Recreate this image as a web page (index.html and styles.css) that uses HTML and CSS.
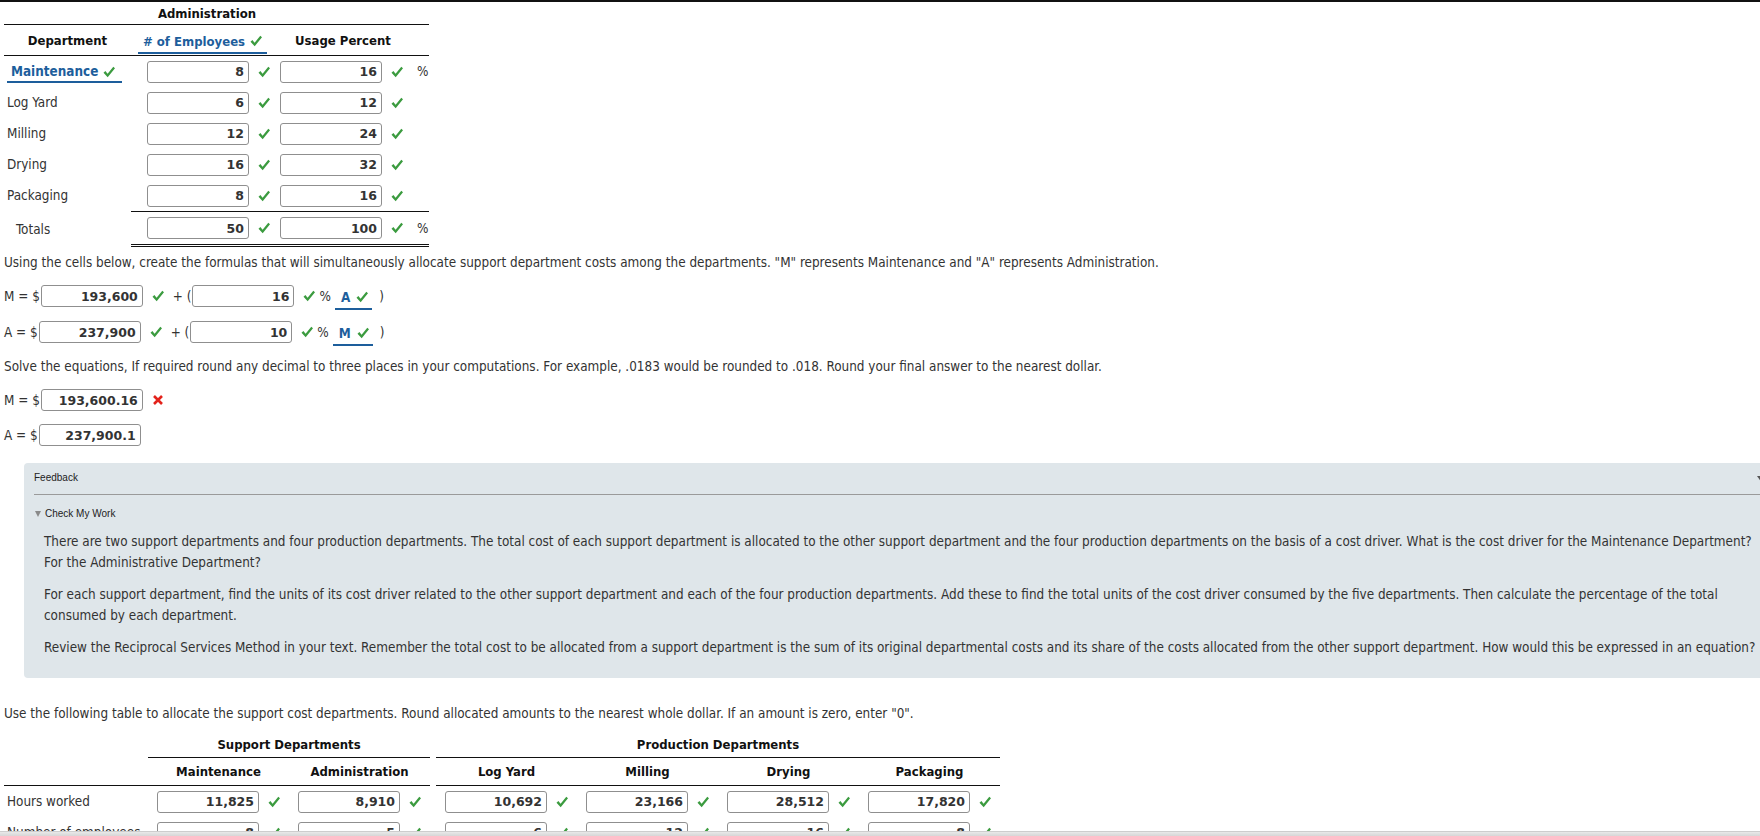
FILE: index.html
```html
<!DOCTYPE html>
<html lang="en">
<head>
<meta charset="utf-8">
<title>Reciprocal Services Method</title>
<link rel="stylesheet" href="styles.css">
</head>
<body>
<svg width="0" height="0" class="defs" aria-hidden="true">
  <defs>
    <path id="ckp" d="M0.5 6.7 L2.4 5.1 L4.6 7.8 L10.3 0.8 L12 2.2 L4.7 11.2 Z"/>
  </defs>
</svg>
<div class="page">

  <div class="emp">
    <div class="r1"></div>
    <div class="r1 th th-admin">Administration</div>
    <div class="r1"></div>
    <div class="r1"></div>

    <div class="r2 th">Department</div>
    <div class="r2 th"><span class="sel sel-h"># of Employees <svg class="ck" viewBox="0 0 12 12"><use href="#ckp"/></svg></span></div>
    <div class="r2 th">Usage Percent</div>
    <div class="r2"></div>

    <div class="lab"><span class="sel sel-d">Maintenance <svg class="ck" viewBox="0 0 12 12"><use href="#ckp"/></svg></span></div>
    <div class="num"><span class="box">8</span><svg class="ck" viewBox="0 0 12 12"><use href="#ckp"/></svg></div>
    <div class="use"><span class="box">16</span><svg class="ck" viewBox="0 0 12 12"><use href="#ckp"/></svg></div>
    <div class="pct">%</div>

    <div class="lab">Log Yard</div>
    <div class="num"><span class="box">6</span><svg class="ck" viewBox="0 0 12 12"><use href="#ckp"/></svg></div>
    <div class="use"><span class="box">12</span><svg class="ck" viewBox="0 0 12 12"><use href="#ckp"/></svg></div>
    <div class="pct"></div>

    <div class="lab">Milling</div>
    <div class="num"><span class="box">12</span><svg class="ck" viewBox="0 0 12 12"><use href="#ckp"/></svg></div>
    <div class="use"><span class="box">24</span><svg class="ck" viewBox="0 0 12 12"><use href="#ckp"/></svg></div>
    <div class="pct"></div>

    <div class="lab">Drying</div>
    <div class="num"><span class="box">16</span><svg class="ck" viewBox="0 0 12 12"><use href="#ckp"/></svg></div>
    <div class="use"><span class="box">32</span><svg class="ck" viewBox="0 0 12 12"><use href="#ckp"/></svg></div>
    <div class="pct"></div>

    <div class="lab">Packaging</div>
    <div class="num"><span class="box">8</span><svg class="ck" viewBox="0 0 12 12"><use href="#ckp"/></svg></div>
    <div class="use"><span class="box">16</span><svg class="ck" viewBox="0 0 12 12"><use href="#ckp"/></svg></div>
    <div class="pct"></div>

    <div class="totlab">Totals</div>
    <div class="num tot"><span class="box">50</span><svg class="ck" viewBox="0 0 12 12"><use href="#ckp"/></svg></div>
    <div class="use tot"><span class="box">100</span><svg class="ck" viewBox="0 0 12 12"><use href="#ckp"/></svg></div>
    <div class="pct tot">%</div>
  </div>

  <p class="line using">Using the cells below, create the formulas that will simultaneously allocate support department costs among the departments. "M" represents Maintenance and "A" represents Administration.</p>

  <div class="frm f1">
    <span class="flab">M = $</span><span class="box">193,600</span><svg class="ck" viewBox="0 0 12 12"><use href="#ckp"/></svg>
    <span class="op">+&nbsp;(</span><span class="box">16</span><svg class="ck" viewBox="0 0 12 12"><use href="#ckp"/></svg>
    <span class="pc">%</span><span class="sel sel-f">A <svg class="ck" viewBox="0 0 12 12"><use href="#ckp"/></svg></span><span class="cl">)</span>
  </div>

  <div class="frm f2">
    <span class="flab">A = $</span><span class="box">237,900</span><svg class="ck" viewBox="0 0 12 12"><use href="#ckp"/></svg>
    <span class="op">+&nbsp;(</span><span class="box">10</span><svg class="ck" viewBox="0 0 12 12"><use href="#ckp"/></svg>
    <span class="pc">%</span><span class="sel sel-f">M <svg class="ck" viewBox="0 0 12 12"><use href="#ckp"/></svg></span><span class="cl">)</span>
  </div>

  <p class="line solve">Solve the equations, If required round any decimal to three places in your computations. For example, .0183 would be rounded to .018. Round your final answer to the nearest dollar.</p>

  <div class="frm f3">
    <span class="flab">M = $</span><span class="box">193,600.16</span><svg class="xx" viewBox="0 0 10 10"><path d="M1 1 L9 9 M9 1 L1 9"/></svg>
  </div>

  <div class="frm f4">
    <span class="flab">A = $</span><span class="box">237,900.1</span>
  </div>

  <section class="feedback">
    <div class="fb-head">
      <span>Feedback</span>
      <svg class="fb-tog" viewBox="0 0 7 5"><polygon points="0,0 7,0 3.5,5"/></svg>
    </div>
    <div class="cmw"><svg class="tri" viewBox="0 0 6 6"><polygon points="0,0 6,0 3,6"/></svg><span>Check My Work</span></div>
    <div class="fb-body">
      <p>There are two support departments and four production departments. The total cost of each support department is allocated to the other support department and the four production departments on the basis of a cost driver. What is the cost driver for the Maintenance Department? For the Administrative Department?</p>
      <p>For each support department, find the units of its cost driver related to the other support department and each of the four production departments. Add these to find the total units of the cost driver consumed by the five departments. Then calculate the percentage of the total consumed by each department.</p>
      <p>Review the Reciprocal Services Method in your text. Remember the total cost to be allocated from a support department is the sum of its original departmental costs and its share of the costs allocated from the other support department. How would this be expressed in an equation?</p>
    </div>
  </section>

  <p class="line usetab">Use the following table to allocate the support cost departments. Round allocated amounts to the nearest whole dollar. If an amount is zero, enter "0".</p>

  <div class="dist">
    <div class="g1"></div>
    <div class="g1 th grp sp2">Support Departments</div>
    <div class="g1"></div>
    <div class="g1 th grp sp4">Production Departments</div>

    <div class="g2 bl"></div>
    <div class="g2 bl th">Maintenance</div>
    <div class="g2 bl th">Administration</div>
    <div class="g2"></div>
    <div class="g2 bl th">Log Yard</div>
    <div class="g2 bl th">Milling</div>
    <div class="g2 bl th">Drying</div>
    <div class="g2 bl th">Packaging</div>

    <div class="dl">Hours worked</div>
    <div class="v"><span class="box">11,825</span><svg class="ck" viewBox="0 0 12 12"><use href="#ckp"/></svg></div>
    <div class="v"><span class="box">8,910</span><svg class="ck" viewBox="0 0 12 12"><use href="#ckp"/></svg></div>
    <div class="gap"></div>
    <div class="v"><span class="box">10,692</span><svg class="ck" viewBox="0 0 12 12"><use href="#ckp"/></svg></div>
    <div class="v"><span class="box">23,166</span><svg class="ck" viewBox="0 0 12 12"><use href="#ckp"/></svg></div>
    <div class="v"><span class="box">28,512</span><svg class="ck" viewBox="0 0 12 12"><use href="#ckp"/></svg></div>
    <div class="v"><span class="box">17,820</span><svg class="ck" viewBox="0 0 12 12"><use href="#ckp"/></svg></div>

    <div class="dl">Number of employees</div>
    <div class="v"><span class="box">8</span><svg class="ck" viewBox="0 0 12 12"><use href="#ckp"/></svg></div>
    <div class="v"><span class="box">5</span><svg class="ck" viewBox="0 0 12 12"><use href="#ckp"/></svg></div>
    <div class="gap"></div>
    <div class="v"><span class="box">6</span><svg class="ck" viewBox="0 0 12 12"><use href="#ckp"/></svg></div>
    <div class="v"><span class="box">12</span><svg class="ck" viewBox="0 0 12 12"><use href="#ckp"/></svg></div>
    <div class="v"><span class="box">16</span><svg class="ck" viewBox="0 0 12 12"><use href="#ckp"/></svg></div>
    <div class="v"><span class="box">8</span><svg class="ck" viewBox="0 0 12 12"><use href="#ckp"/></svg></div>
  </div>

</div>
<div class="hscroll"></div>
</body>
</html>
```

FILE: styles.css
```css
html, body {
  margin: 0;
  padding: 0;
  overflow-x: hidden;
}

body {
  background: #fff;
  color: #333;
  font-family: "DejaVu Sans Condensed", "DejaVu Sans", sans-serif;
  font-stretch: condensed;
  font-size: 13.4px;
  border-top: 2px solid #111;
}

.defs {
  position: absolute;
}

.page {
  padding: 0 4px;
}

.ck {
  width: 12px;
  height: 12px;
  fill: #3b9b3f;
  flex: none;
}

.box {
  box-sizing: border-box;
  width: 102px;
  height: 22px;
  border: 1px solid #8f8f8f;
  border-radius: 3px;
  background: #fff;
  display: inline-flex;
  align-items: center;
  justify-content: flex-end;
  padding-right: 4px;
  font-family: "DejaVu Sans", sans-serif;
  font-stretch: normal;
  font-weight: bold;
  font-size: 12.5px;
  color: #333;
  flex: none;
}

.th {
  font-weight: bold;
  font-size: 13px;
  color: #111;
  justify-content: center;
}

.sel {
  display: inline-flex;
  align-items: center;
  gap: 5px;
  color: #1d5e9c;
  font-weight: bold;
  border-bottom: 2px solid #1d5e9c;
}

/* ---------- top allocation table ---------- */
.emp {
  display: grid;
  grid-template-columns: 127px 143px 138px 17px;
  width: 425px;
}

.emp > div {
  box-sizing: border-box;
  display: flex;
  align-items: center;
  height: 31px;
}

.emp > .r1 {
  height: 23px;
  border-bottom: 1px solid #111;
}

.emp > .r2 {
  height: 31px;
  border-bottom: 1px solid #111;
}

.th-admin {
  padding-left: 9px;
}

.sel-h {
  padding: 5px 5px 3px;
  margin-top: 2px;
}

.sel-d {
  padding: 0 7px 2px 4px;
  margin-top: 4px;
}

.emp > .lab {
  padding-left: 3px;
}

.emp > .num {
  padding-left: 16px;
  gap: 9px;
}

.emp > .use {
  padding-left: 6px;
  gap: 9px;
}

.emp > .pct {
  padding-left: 5px;
}

.emp > .totlab {
  height: 36px;
  padding-left: 12px;
}

.emp > .tot {
  height: 36px;
  border-top: 1px solid #111;
  border-bottom: 3px double #111;
}

/* ---------- text lines ---------- */
.line {
  margin: 0;
  line-height: 20px;
}

.using {
  margin-top: 6px;
}

.solve {
  margin-top: 13px;
}

/* ---------- formulas ---------- */
.frm {
  display: flex;
  align-items: center;
  height: 24px;
}

.f1 { margin-top: 11px; }
.f2 { margin-top: 12px; }
.f3 { margin-top: 11px; }
.f4 { margin-top: 11px; }

.frm .box {
  margin-left: 1px;
}

.frm > .ck {
  margin-left: 9px;
}

.op {
  margin-left: 9px;
}

.pc {
  margin-left: 4px;
}

.sel-f {
  margin-left: 4px;
  padding: 0 4px 2px 6px;
  gap: 6px;
  margin-top: 6px;
  height: 18px;
}

.cl {
  margin-left: 7px;
}

.xx {
  width: 10px;
  height: 10px;
  margin-left: 10px;
  stroke: #e3221b;
  stroke-width: 2.6;
  fill: none;
}

/* ---------- feedback ---------- */
.feedback {
  box-sizing: border-box;
  width: 1760px;
  margin: 16px 0 0 20px;
  padding: 8px 20px 20px 10px;
  background: #dfe6ea;
  border-radius: 4px;
}

.fb-head {
  display: flex;
  align-items: center;
  justify-content: space-between;
  font-family: "Liberation Sans", Arial, sans-serif;
  font-stretch: normal;
  font-size: 10px;
  line-height: 14px;
  color: #222;
  padding-bottom: 9px;
  border-bottom: 1px solid #9a9a9a;
}

.fb-tog {
  width: 7px;
  height: 5px;
  fill: #555;
}

.cmw {
  display: flex;
  align-items: center;
  gap: 4px;
  margin-top: 12px;
  font-family: "Liberation Sans", Arial, sans-serif;
  font-stretch: normal;
  font-size: 10px;
  line-height: 14px;
  color: #222;
}

.tri {
  width: 6px;
  height: 6px;
  fill: #8a8a8a;
  margin-left: 1px;
}

.fb-body {
  padding-left: 10px;
  padding-top: 10px;
}

.fb-body p {
  margin: 0 0 11px;
  line-height: 21px;
}

.fb-body p:last-child {
  margin-bottom: 0;
}

.usetab {
  margin-top: 26px;
}

/* ---------- distribution table ---------- */
.dist {
  display: grid;
  grid-template-columns: 144px 141px 141px 6px 141px 141px 141px 141px;
  margin-top: 7px;
}

.dist > div {
  box-sizing: border-box;
  display: flex;
  align-items: center;
}

.dist > .g1 {
  height: 27px;
}

.dist > .grp {
  border-bottom: 1px solid #111;
}

.sp2 { grid-column: span 2; }
.sp4 { grid-column: span 4; }

.dist > .g2 {
  height: 28px;
}

.dist > .bl {
  border-bottom: 1px solid #111;
}

.dist > .dl,
.dist > .v,
.dist > .gap {
  height: 31px;
}

.dist > .dl {
  padding-left: 3px;
}

.dist > .v {
  justify-content: center;
  gap: 9px;
}

.hscroll {
  position: fixed;
  left: 0;
  right: 0;
  bottom: 0;
  height: 4px;
  background: linear-gradient(#e9e9e9, #d6d6d6);
  border-top: 1px solid #cdcdcd;
}
```
